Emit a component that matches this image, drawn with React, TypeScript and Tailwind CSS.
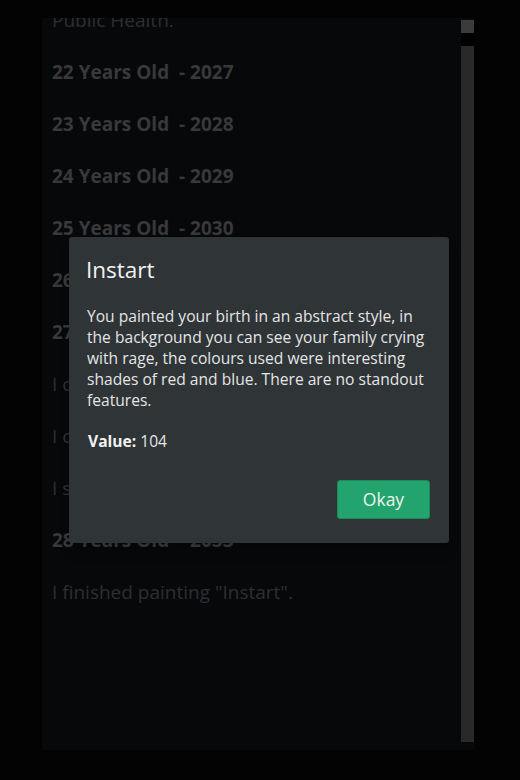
import React from 'react';

const rows: { text: string; bold?: boolean }[] = [
  { text: 'Public Health.' },
  { text: '22 Years Old  - 2027', bold: true },
  { text: '23 Years Old  - 2028', bold: true },
  { text: '24 Years Old  - 2029', bold: true },
  { text: '25 Years Old  - 2030', bold: true },
  { text: '26 Years Old  - 2031', bold: true },
  { text: '27 Years Old  - 2032', bold: true },
  { text: 'I contemplated my life choices.' },
  { text: 'I called my parents.' },
  { text: 'I started painting.' },
  { text: '28 Years Old  - 2033', bold: true },
];

export default function App() {
  return (
    <div className="relative h-[780px] w-[520px] overflow-hidden bg-[#030303] pt-[18px] font-['Open_Sans',sans-serif]">
      {/* Story panel */}
      <div className="ml-[42px] flex h-[732px] w-[432px] overflow-hidden bg-[#07080a]">
        <div className="mt-[-11px] flex-1 pl-[10px]">
          {rows.map((r, i) => (
            <p
              key={i}
              className={
                r.bold
                  ? 'mb-[26px] whitespace-pre text-[19px] font-bold leading-[26px] text-[#38393b]'
                  : 'mb-[26px] whitespace-pre text-[19px] leading-[26px] text-[#2e2f32]'
              }
            >
              {r.text}
            </p>
          ))}
          <p className="mt-[3px] text-[19px] leading-[26px] text-[#2e2f32]">I finished painting "Instart".</p>
        </div>

        {/* Scrollbar */}
        <div className="mt-[2px] flex w-[13px] flex-col">
          <div className="h-[13px] bg-[#3a3b3c]" />
          <div className="h-[13px] bg-black" />
          <div className="h-[696px] bg-[#28292a]" />
        </div>
      </div>

      {/* Modal */}
      <div className="absolute left-[69px] top-[237px] flex h-[306px] w-[380px] flex-col rounded-[3px] bg-[#2f3437] pl-[17px] pr-[19px] pt-[18px] pb-[24px] shadow-lg">
        <h2 className="text-[22.5px] leading-[30px] text-[#f2f2f2]">Instart</h2>
        <p className="mt-[21px] pl-[1px] text-[15.6px] leading-[21px] text-[#e4e5e6]">
          You painted your birth in an abstract style, in the background you can see your family crying with rage, the colours used were interesting shades of red and blue. There are no standout features.
        </p>
        <p className="mt-[20px] pl-[2px] text-[15.6px] leading-[21px] text-[#e4e5e6]">
          <span className="font-bold text-[#f2f2f2]">Value:</span> 104
        </p>
        <div className="mt-auto flex justify-end">
          <button className="h-[39px] w-[93px] rounded-[3px] border border-[#1b8a5c] bg-[#23a36d] text-[17.5px] text-[#eaf6ef]">
            Okay
          </button>
        </div>
      </div>
    </div>
  );
}
